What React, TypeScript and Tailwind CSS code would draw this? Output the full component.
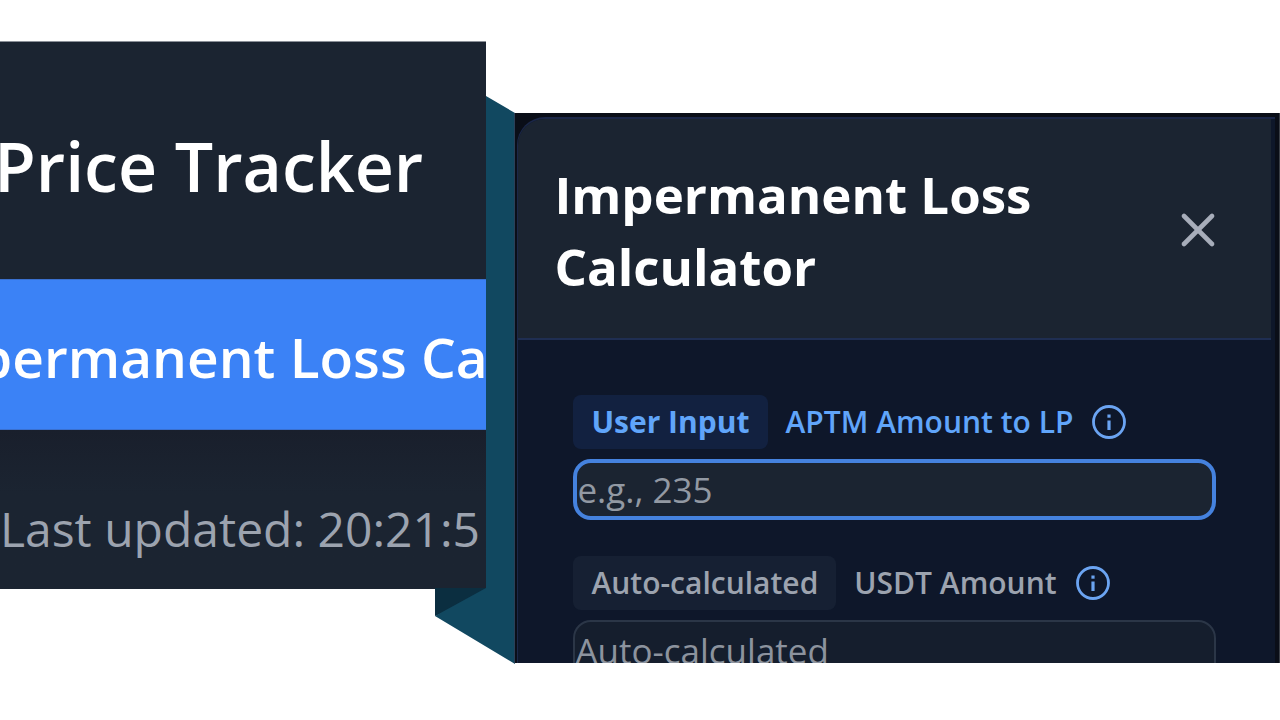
import { X } from 'lucide-react'

function InfoIcon() {
  return (
    <svg className="size-9 shrink-0" viewBox="0 0 36 36" fill="none" stroke="#6ba4f2" aria-hidden="true">
      <circle cx="18" cy="18" r="15.5" strokeWidth="2.8" />
      <path d="M18 16.5v9.5" strokeWidth="3.2" />
      <path d="M18 10.5v3.2" strokeWidth="3.2" />
    </svg>
  )
}

function TrackerCard() {
  return (
    <section className="mt-[41px] w-[38%] shrink-0 overflow-hidden whitespace-nowrap border-t border-[#8b9098] bg-[#1b2431]">
      <h1 className="-ml-1.5 pt-[72px] pb-[61px] text-[68px] leading-[104px] font-semibold text-white">
        Price Tracker
      </h1>
      <button
        type="button"
        className="block w-full overflow-hidden border-y border-[#3a70cf] bg-[#3b82f6] pt-10 pb-9 text-left text-[55px] leading-[73px] font-semibold text-white"
      >
        <span className="-ml-[22px]">permanent Loss Ca</span>
      </button>
      <p className="bg-linear-to-b from-[#191f2c] to-[#1b2431] to-40% pt-[63px] pb-6 text-[48px] leading-[72px] text-[#9ca3af]">
        Last updated: 20:21:5
      </p>
    </section>
  )
}

function Ribbon() {
  return (
    <svg className="mt-[96px] -ml-[51px] h-[568px] w-20 shrink-0" viewBox="0 0 80 568" aria-hidden="true">
      <path d="M0 492H52V500L0 520Z" fill="#0b2e40" />
      <path d="M51 0L80 17V568L0 520L51 492Z" fill="#114860" />
    </svg>
  )
}

function CalculatorDialog() {
  return (
    <section className="mt-[113px] -ml-px h-[550px] min-w-0 flex-1 overflow-hidden border-x border-l-[#2b3f58] border-r-[#3a3f47] bg-[#0a0e18] pt-1 pr-1 pl-0.5">
      <div className="h-full overflow-hidden rounded-tl-[28px] border-t-2 border-l border-[#1b2748] bg-[#0e172a]">
        <header className="mr-1 flex items-center justify-between border-b-2 border-[#1f2e52] bg-[#1b2431] pt-[39px] pr-[45px] pb-9 pl-9">
          <h2 className="text-[51px] leading-[72px] font-bold text-white">
            Impermanent Loss
            <br />
            Calculator
          </h2>
          <button type="button" aria-label="Close" className="text-[#a7adba]">
            <X className="size-14" strokeWidth={2} />
          </button>
        </header>

        <form className="flex flex-col gap-9 pt-[55px] pr-[59px] pl-[55px]">
          <div className="flex flex-col gap-2.5">
            <label htmlFor="aptm" className="flex items-center gap-[18px] whitespace-nowrap text-[30px] leading-[54px] font-semibold text-[#60a5fa]">
              <span className="rounded-lg bg-[#122140] px-[18px] font-bold">User Input</span>
              APTM Amount to LP
              <InfoIcon />
            </label>
            <input
              id="aptm"
              type="text"
              placeholder="e.g., 235"
              className="h-[61px] w-full rounded-[18px] border-4 border-[#4582de] bg-[#1b2431] text-[35px] outline-none placeholder:text-[#9299a3]"
            />
          </div>
          <div className="flex flex-col gap-2.5">
            <label htmlFor="usdt" className="flex items-center gap-[18px] whitespace-nowrap text-[30px] leading-[54px] font-semibold text-[#9ca3af]">
              <span className="rounded-lg bg-[#162033] px-[18px]">Auto-calculated</span>
              USDT Amount
              <InfoIcon />
            </label>
            <input
              id="usdt"
              type="text"
              readOnly
              placeholder="Auto-calculated"
              className="h-[61px] w-full rounded-[18px] border-2 border-[#2b3647] bg-[#151e2d] text-[35px] outline-none placeholder:text-[#8c939e]"
            />
          </div>
        </form>
      </div>
    </section>
  )
}

export default function App() {
  return (
    <main className="flex min-h-screen items-start overflow-hidden bg-white font-['Open_Sans','Noto_Sans',sans-serif]">
      <TrackerCard />
      <Ribbon />
      <CalculatorDialog />
    </main>
  )
}
